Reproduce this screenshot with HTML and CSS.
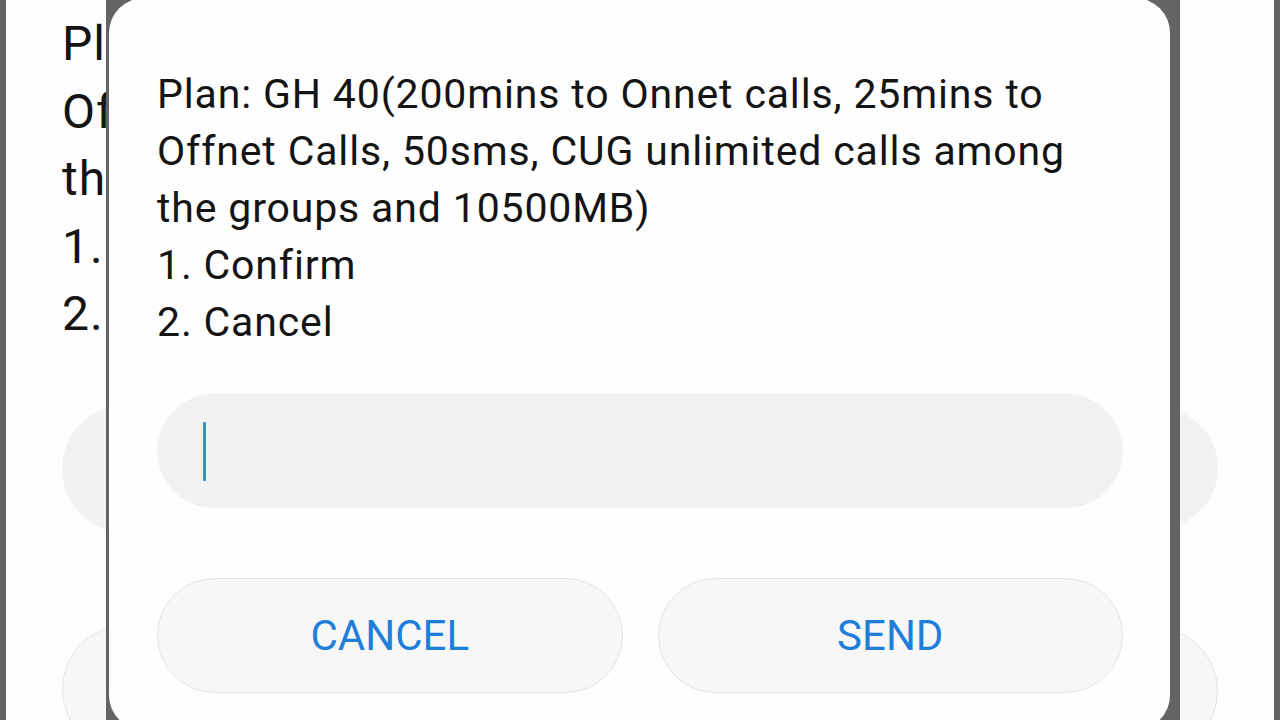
FILE: index.html
```html
<!DOCTYPE html>
<html lang="en">
<head>
<meta charset="utf-8">
<title>USSD dialog</title>
<link rel="stylesheet" href="styles.css">
</head>
<body>
<div class="screen">
  <div class="side side-left">
    <div class="ghost-text">
      <div>Plan: GH 40(200mins to Onnet calls, 25mins to</div>
      <div>Offnet Calls, 50sms, CUG unlimited calls among</div>
      <div>the groups and 10500MB)</div>
      <div>1. Confirm</div>
      <div>2. Cancel</div>
    </div>
    <div class="ghost-input"></div>
    <div class="ghost-btn"></div>
  </div>
  <div class="stage">
    <div class="dialog">
      <div class="message">
        <div>Plan: GH 40(200mins to Onnet calls, 25mins to</div>
        <div>Offnet Calls, 50sms, CUG unlimited calls among</div>
        <div>the groups and 10500MB)</div>
        <div>1. Confirm</div>
        <div>2. Cancel</div>
      </div>
      <div class="field"><span class="caret"></span></div>
      <div class="actions">
        <button class="btn">CANCEL</button>
        <button class="btn">SEND</button>
      </div>
    </div>
  </div>
  <div class="side side-right">
    <div class="ghost-input ghost-input-r"></div>
    <div class="ghost-btn ghost-btn-r"></div>
  </div>
</div>
</body>
</html>
```

FILE: styles.css
```css
html, body {
  margin: 0;
  padding: 0;
}
body {
  width: 1280px;
  height: 720px;
  overflow: hidden;
  background: #646464;
  font-family: Roboto, "Noto Sans", "Liberation Sans", sans-serif;
}
.screen {
  box-sizing: border-box;
  width: 1280px;
  height: 720px;
  overflow: hidden;
  display: flex;
  padding: 0 6px;
  background: #646464;
}
.side {
  flex-shrink: 0;
  height: 720px;
  background: #fdfdfd;
  overflow: hidden;
  display: flex;
  flex-direction: column;
}
.side-left {
  width: 100px;
}
.side-right {
  width: 94px;
}
.ghost-text {
  padding: 10px 0 0 56px;
  font-size: 48px;
  line-height: 67.5px;
  letter-spacing: 1px;
  color: #141414;
  white-space: nowrap;
}
.ghost-input {
  flex-shrink: 0;
  margin: 57px 0 0 56px;
  width: 400px;
  height: 128px;
  border-radius: 64px;
  background: #f2f2f2;
}
.ghost-btn {
  flex-shrink: 0;
  box-sizing: border-box;
  margin: 92px 0 0 56px;
  width: 400px;
  height: 128px;
  border-radius: 64px;
  background: #f7f7f7;
  border: 1px solid #e4e4e4;
}
.ghost-input-r {
  margin: 408px 0 0 -262px;
  width: 300px;
  height: 120px;
  border-radius: 60px;
}
.ghost-btn-r {
  margin: 99px 0 0 -262px;
  width: 300px;
}
.stage {
  flex: 1;
  min-width: 0;
  padding-left: 3px;
}
.dialog {
  box-sizing: border-box;
  width: 1061px;
  height: 732px;
  margin-top: -2px;
  border-radius: 35px;
  background: #fefefe;
  padding: 68px 47px 0 48px;
}
.message {
  font-size: 41px;
  line-height: 57px;
  letter-spacing: 0.85px;
  color: #141414;
  white-space: nowrap;
}
.field {
  margin-top: 43px;
  height: 114px;
  border-radius: 57px;
  background: #f2f2f2;
  display: flex;
  align-items: center;
  padding-left: 46px;
}
.caret {
  width: 3px;
  height: 59px;
  border-radius: 1px;
  background: #3b8ad8;
}
.actions {
  margin-top: 70px;
  display: flex;
  gap: 35px;
}
.btn {
  flex: 1;
  height: 115px;
  border-radius: 58px;
  background: #f7f7f7;
  border: 1px solid #e3e3e3;
  font-family: Roboto, "Noto Sans", "Liberation Sans", sans-serif;
  font-size: 42px;
  color: #1e7fd9;
  padding: 0;
}
```
